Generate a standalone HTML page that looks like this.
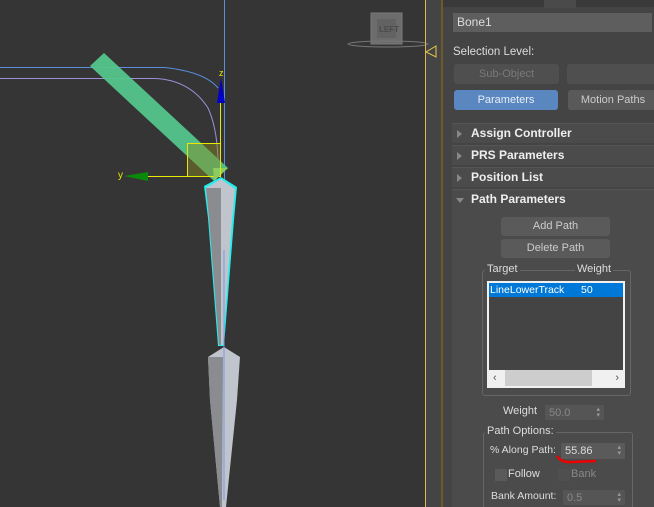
<!DOCTYPE html>
<html><head><style>
*{margin:0;padding:0;box-sizing:border-box}
html,body{width:654px;height:507px;overflow:hidden}
body{background:#444;font-family:"Liberation Sans",sans-serif;font-size:11px;color:#ddd;position:relative}
.a{position:absolute}
.btn{position:absolute;background:#5a5a5a;border-radius:3px;text-align:center;color:#ccc;line-height:20px;height:20px}
.hdr{position:absolute;left:452px;width:202px;height:20px;background:#4b4b4b;border-top:1px solid #555;font-weight:bold;color:#eee;font-size:12px;line-height:19px;padding-left:19px}
.hdr:before{content:"";position:absolute;left:5px;top:6px;border-left:5px solid #888;border-top:4px solid transparent;border-bottom:4px solid transparent}
.hdr.open:before{left:4px;top:8px;border-top:5px solid #888;border-left:4px solid transparent;border-right:4px solid transparent;border-bottom:0}
.fld{position:absolute;background:#555;color:#888;font-size:11px;line-height:16px;padding-left:4px;border:1px solid #4a4a4a}
.sp{position:absolute;right:4px;top:2px;font-size:7px;line-height:6px;color:#999}
</style></head><body>
<div class="a" style="left:0;top:0;width:426px;height:507px;background:#353535"></div>
<svg class="a" style="left:0;top:0" width="450" height="507">
<line x1="224.5" y1="0" x2="224.5" y2="180" stroke="#5b8ede" stroke-width="1"/>
<path d="M0 67.5 H165 Q205 72 218 88" stroke="#5b8ede" fill="none"/>
<path d="M0 78.5 H155 Q190 80 208 108 Q218 130 218 165" stroke="#9b8fd8" fill="none"/>
<polygon points="90,66 104,53 228,168 214,181" fill="#55c58c" opacity="0.95"/>
<rect x="187.5" y="143.5" width="33" height="33" fill="#8a8a20" fill-opacity="0.45" stroke="#e8e800"/>
<polygon points="213,168 228,168 214,181" fill="#8ccc60"/>
<line x1="220.5" y1="103" x2="220.5" y2="176" stroke="#e8e800"/>
<polygon points="221,78 217,103 225,103" fill="#0000c8"/>
<line x1="148" y1="176.5" x2="188" y2="176.5" stroke="#e8e800"/>
<polygon points="124,176 148,172 148,181" fill="#0a8a0a"/>
<text x="118" y="178" fill="#e8e800" font-size="10" font-family="Liberation Sans">y</text>
<text x="219" y="76" fill="#e8e800" font-size="9" font-family="Liberation Sans">z</text>
<polygon points="204,186 221,177 237,187 234,220 224,346 218,346 208,218" fill="#2ee" />
<polygon points="206,188 221,179 235,189 232,220 223,345 219,345 209,218" fill="#c0c4cc"/>
<polygon points="206,188 221,188 221,345 219,345 209,218" fill="#8a8c90"/>
<polygon points="208,357 224,347 240,357 237,400 226,507 220,507 210,400" fill="#c0c4cc"/>
<polygon points="208,357 223,357 222,507 220,507 210,400" fill="#8a8c90"/>
<line x1="224" y1="250" x2="224" y2="500" stroke="#7a9ae0"/>
<rect x="371" y="13" width="31" height="31" fill="#6c6c6c" stroke="#7a7a7a"/>
<rect x="377" y="19" width="19" height="19" fill="#626262"/>
<text x="379" y="32" fill="#4a4a4a" font-size="8" font-weight="bold" font-family="Liberation Sans">LEFT</text>
<ellipse cx="388" cy="44" rx="40" ry="3" fill="none" stroke="#777"/>
<line x1="425.5" y1="0" x2="425.5" y2="507" stroke="#e0b84a"/>
<polygon points="436,46 426,52 436,57" fill="none" stroke="#e8c84a"/>
<rect x="441" y="0" width="2" height="507" fill="#6e5a28"/>
</svg>
<div class="a" style="left:443px;top:0;width:211px;height:507px;background:#444"></div>
<div class="a" style="left:443px;top:0;width:211px;height:7px;background:#3a3a3a"></div>
<div class="a" style="left:544px;top:0;width:32px;height:8px;background:#4a4a4a"></div>
<div class="a" style="left:453px;top:13px;width:199px;height:19px;background:#5e5e5e;color:#ddd;padding-left:4px;line-height:19px;font-size:12px">Bone1</div>
<div class="a" style="left:453px;top:46px;color:#ddd;font-size:11.5px">Selection Level:</div>
<div class="btn" style="left:454px;top:64px;width:105px;background:#4f4f4f;color:#7a7a7a">Sub-Object</div>
<div class="btn" style="left:567px;top:64px;width:90px;background:#4f4f4f"></div>
<div class="btn" style="left:454px;top:90px;width:104px;background:#5a87c0;color:#e8eef8">Parameters</div>
<div class="btn" style="left:568px;top:90px;width:90px;background:#595959">Motion Paths</div>
<div class="hdr" style="top:123px">Assign Controller</div>
<div class="hdr" style="top:145px">PRS Parameters</div>
<div class="hdr" style="top:167px">Position List</div>
<div class="a" style="left:452px;top:189px;width:202px;height:318px;background:#4b4b4b"></div>
<div class="hdr open" style="top:189px">Path Parameters</div>
<div class="btn" style="left:501px;top:217px;width:109px;height:19px;line-height:19px">Add Path</div>
<div class="btn" style="left:501px;top:239px;width:109px;height:19px;line-height:19px">Delete Path</div>
<div class="a" style="left:482px;top:270px;width:149px;height:126px;border:1px solid #666;border-radius:3px"></div>
<div class="a" style="left:485px;top:263px;background:#4b4b4b;padding:0 2px">Target</div>
<div class="a" style="left:575px;top:263px;background:#4b4b4b;padding:0 2px">Weight</div>
<div class="a" style="left:487px;top:281px;width:138px;height:107px;border:2px solid #f0f0f0;background:#444"></div>
<div class="a" style="left:489px;top:283px;width:134px;height:14px;background:#0078d7;color:#fff;font-size:10.5px;line-height:14px;padding-left:1px">LineLowerTrack<span style="position:absolute;left:92px">50</span></div>
<div class="a" style="left:489px;top:370px;width:134px;height:16px;background:#f0f0f0;color:#555;font-size:11px;line-height:16px;padding:0 4px">‹<span style="float:right">›</span></div>
<div class="a" style="left:505px;top:370px;width:87px;height:16px;background:#cdcdcd"></div>
<div class="a" style="left:503px;top:405px">Weight</div>
<div class="fld" style="left:544px;top:404px;width:61px;height:17px">50.0<span class="sp">▴<br>▾</span></div>
<div class="a" style="left:483px;top:432px;width:150px;height:80px;border:1px solid #666;border-radius:3px"></div>
<div class="a" style="left:485px;top:425px;background:#4b4b4b;padding:0 2px">Path Options:</div>
<div class="a" style="left:490px;top:444px;color:#ddd;font-size:10.5px">% Along Path:</div>
<div class="fld" style="left:560px;top:442px;width:66px;height:18px;background:#5a5a5a;color:#ddd">55.86<span class="sp">▴<br>▾</span></div>
<svg class="a" style="left:555px;top:454px" width="45" height="14"><path d="M2 2 Q6 9 18 8 L41 7" stroke="#e00" stroke-width="2.5" fill="none"/></svg>
<div class="a" style="left:495px;top:469px;width:12px;height:12px;background:#5a5a5a"></div>
<div class="a" style="left:508px;top:468px;color:#ddd">Follow</div>
<div class="a" style="left:558px;top:469px;width:12px;height:12px;background:#4f4f4f"></div>
<div class="a" style="left:571px;top:468px;color:#888">Bank</div>
<div class="a" style="left:491px;top:490px;font-size:10.5px">Bank Amount:</div>
<div class="fld" style="left:562px;top:489px;width:64px;height:17px">0.5<span class="sp">▴<br>▾</span></div>
</body></html>
